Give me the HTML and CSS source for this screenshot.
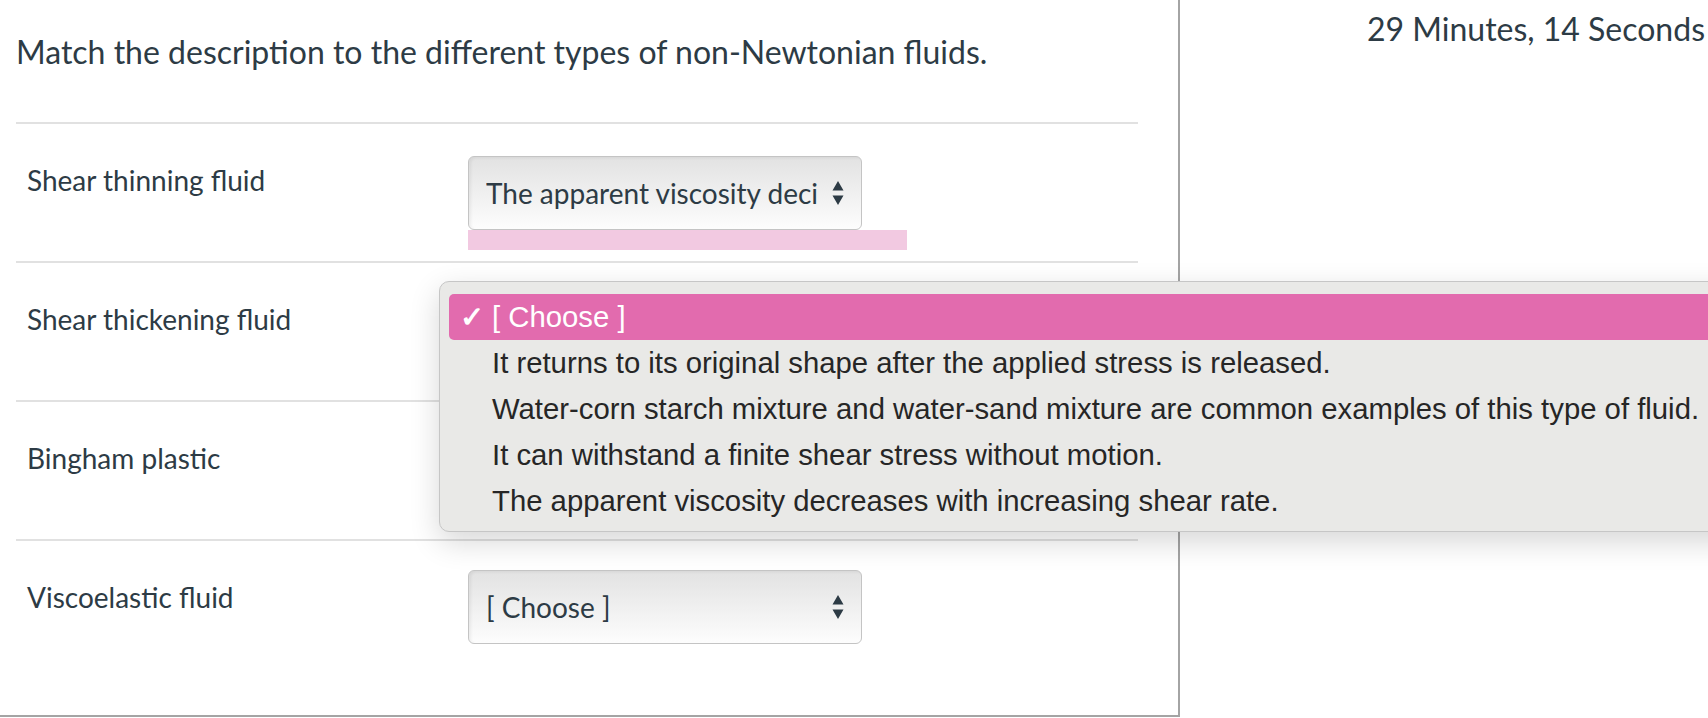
FILE: index.html
```html
<!DOCTYPE html>
<html lang="en">
<head>
<meta charset="utf-8">
<title>Quiz</title>
<link rel="stylesheet" href="styles.css">
</head>
<body>
<div class="page">
  <main class="quiz">
    <header class="question-head">
      <h1 class="question-text">Match the description to the different types of non-Newtonian fluids.</h1>
    </header>
    <div class="answers">
      <div class="row">
        <div class="label">Shear thinning fluid</div>
        <div class="choice">
          <div class="select"><span class="select-text">The apparent viscosity deci</span><svg class="arrows" width="12" height="24" viewBox="0 0 12 24"><path d="M6 0 L11.5 9.5 H0.5 Z M6 24 L11.5 14.5 H0.5 Z" fill="#2d3b45"/></svg></div>
          <div class="mark"></div>
        </div>
      </div>
      <div class="row">
        <div class="label">Shear thickening fluid</div>
        <div class="choice">
          <div class="select covered"><span class="select-text">[ Choose ]</span><svg class="arrows" width="12" height="24" viewBox="0 0 12 24"><path d="M6 0 L11.5 9.5 H0.5 Z M6 24 L11.5 14.5 H0.5 Z" fill="#2d3b45"/></svg></div>
        </div>
      </div>
      <div class="row">
        <div class="label">Bingham plastic</div>
        <div class="choice">
          <div class="select covered"><span class="select-text">[ Choose ]</span><svg class="arrows" width="12" height="24" viewBox="0 0 12 24"><path d="M6 0 L11.5 9.5 H0.5 Z M6 24 L11.5 14.5 H0.5 Z" fill="#2d3b45"/></svg></div>
        </div>
      </div>
      <div class="row last">
        <div class="label">Viscoelastic fluid</div>
        <div class="choice">
          <div class="select"><span class="select-text">[ Choose ]</span><svg class="arrows" width="12" height="24" viewBox="0 0 12 24"><path d="M6 0 L11.5 9.5 H0.5 Z M6 24 L11.5 14.5 H0.5 Z" fill="#2d3b45"/></svg></div>
        </div>
      </div>
    </div>
  </main>
  <aside class="side">
    <div class="timer">29 Minutes, 14 Seconds</div>
  </aside>
  <ul class="menu">
    <li class="opt selected"><span class="check">✓</span>[ Choose ]</li>
    <li class="opt">It returns to its original shape after the applied stress is released.</li>
    <li class="opt">Water-corn starch mixture and water-sand mixture are common examples of this type of fluid.</li>
    <li class="opt">It can withstand a finite shear stress without motion.</li>
    <li class="opt">The apparent viscosity decreases with increasing shear rate.</li>
  </ul>
</div>
</body>
</html>
```
FILE: styles.css
```css
* { box-sizing: border-box; }
html, body { margin: 0; padding: 0; }
body {
  width: 1708px;
  height: 718px;
  overflow: hidden;
  background: #fff;
  font-family: "Lato", "Liberation Sans", sans-serif;
  color: #2d3b45;
}
.page {
  position: relative;
  display: flex;
  width: 1708px;
  height: 718px;
}
.quiz {
  width: 1180px;
  height: 717px;
  border-right: 2px solid #a4a4a4;
  border-bottom: 2px solid #a4a4a4;
  padding-left: 16px;
  padding-right: 40px;
  display: flex;
  flex-direction: column;
}
.question-head {
  height: 124px;
  border-bottom: 2px solid #e1e1e1;
  display: flex;
  align-items: center;
  padding-bottom: 18px;
}
.question-text {
  margin: 0;
  font-size: 32px;
  font-weight: 400;
  line-height: 1.2;
}
.row {
  height: 139px;
  border-bottom: 2px solid #e1e1e1;
  display: flex;
  padding-left: 11px;
}
.row.last { border-bottom: none; }
.label {
  width: 441px;
  font-size: 28px;
  padding-top: 40px;
  line-height: 32px;
}
.choice {
  padding-top: 32px;
}
.row.last .choice { padding-top: 29px; }
.select {
  width: 394px;
  height: 74px;
  border: 1px solid #c4c4c4;
  border-radius: 6px;
  background: linear-gradient(#e2e2e2, #fdfdfd);
  box-shadow: inset 2px 1px 3px rgba(0,0,0,0.06), inset 0 -1px 1px rgba(255,255,255,0.9);
  display: flex;
  align-items: center;
  padding: 0 17px 0 17px;
  font-size: 28px;
}
.select.covered .select-text { visibility: hidden; }
.select-text { flex: 1; white-space: nowrap; overflow: hidden; }
.arrows { flex: none; }
.mark {
  width: 439px;
  height: 20px;
  background: #f2c9e1;
}
.side {
  flex: 1;
  position: relative;
}
.timer {
  text-align: right;
  font-size: 32px;
  line-height: 36px;
  padding-top: 11px;
  padding-right: 3px;
  white-space: nowrap;
}
.menu {
  position: absolute;
  left: 439px;
  top: 281px;
  width: 1320px;
  height: 251px;
  margin: 0;
  padding: 12px 0 9px 9px;
  list-style: none;
  background: #e9e9e7;
  border: 1px solid #c6c6c6;
  border-radius: 10px;
  box-shadow: 0 10px 30px rgba(0,0,0,0.16);
  font-family: "Liberation Sans", "Helvetica", sans-serif;
  color: #262626;
}
.opt {
  height: 46px;
  line-height: 46px;
  padding-left: 43px;
  font-size: 29.3px;
  white-space: nowrap;
  position: relative;
}
.opt.selected {
  background: #e26bae;
  color: #fff;
  border-radius: 5px 0 0 5px;
}
.check {
  position: absolute;
  left: 11px;
  top: 0;
  font-weight: 700;
}
```
